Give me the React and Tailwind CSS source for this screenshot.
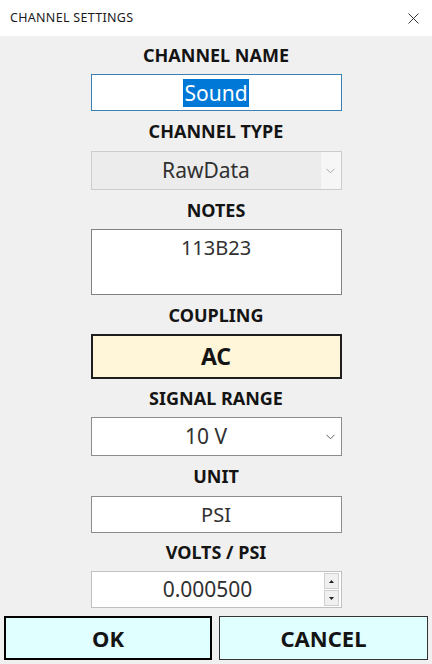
/* eslint-disable */
import { useState } from 'react';

const font = { fontFamily: '"Noto Sans", "Open Sans", sans-serif' };

const Chevron = ({ color = '#606060' }) => (
    <svg width="9" height="6" viewBox="0 0 9 6" fill="none">
        <path d="M0.5 0.8 L4.5 4.8 L8.5 0.8" stroke={color} strokeWidth="1" />
    </svg>
);

const Label = ({ children, h }) => (
    <div className={`${h} flex items-center justify-center text-[18px] font-bold text-[#141414] leading-none`}>
        {children}
    </div>
);

const ChannelSettings = () => {
    const [coupling, setCoupling] = useState('AC');

    return (
        <div className="w-[432px] h-[664px] bg-[#f0f0f0] flex flex-col overflow-hidden" style={font}>
            {/* title bar */}
            <div className="h-[36px] bg-white flex items-center justify-between pl-[10px] pr-[13px]">
                <span className="text-[12.5px] text-[#1b1b1b] tracking-[0.3px]">CHANNEL SETTINGS</span>
                <svg width="11" height="11" viewBox="0 0 11 11">
                    <path d="M0.5 0.5 L10.5 10.5 M10.5 0.5 L0.5 10.5" stroke="#333" strokeWidth="1" />
                </svg>
            </div>

            <div className="flex flex-col items-center">
                <Label h="h-[38px]">CHANNEL NAME</Label>
                <div className="w-[251px] h-[37px] bg-white border border-[#3c7fb1] flex items-center justify-center">
                    <span className="bg-[#0078d7] text-white text-[21px] leading-[28px] px-[1px]">Sound</span>
                </div>

                <Label h="h-[40px]">CHANNEL TYPE</Label>
                <div className="w-[251px] h-[39px] border border-[#cccccc] bg-[#ececec] flex">
                    <div className="flex-1 flex items-center justify-center text-[21px] text-[#303030]">RawData</div>
                    <div className="w-[20px] bg-[#f6f6f6] flex items-center justify-center">
                        <Chevron color="#a8a8a8" />
                    </div>
                </div>

                <Label h="h-[39px]">NOTES</Label>
                <div className="w-[251px] h-[66px] bg-white border border-[#828282] flex justify-center pt-[5px] text-[20px] text-[#303030] leading-[26px]">
                    113B23
                </div>

                <Label h="h-[39px]">COUPLING</Label>
                <button
                    onClick={() => setCoupling(coupling === 'AC' ? 'DC' : 'AC')}
                    className="w-[251px] h-[45px] bg-[#fff6d9] border-2 border-[#1e1e1e] flex items-center justify-center text-[23px] font-bold text-[#141414]"
                >
                    {coupling}
                </button>

                <Label h="h-[38px]">SIGNAL RANGE</Label>
                <div className="w-[251px] h-[39px] bg-white border border-[#8c8c8c] flex items-center pr-[20px] relative">
                    <div className="flex-1 text-center text-[21px] text-[#303030]">10 V</div>
                    <div className="absolute right-[6px] top-[16px]">
                        <Chevron />
                    </div>
                </div>

                <Label h="h-[40px]">UNIT</Label>
                <div className="w-[251px] h-[37px] bg-white border border-[#8c8c8c] flex items-center justify-center text-[20px] text-[#303030]">
                    PSI
                </div>

                <Label h="h-[38px]">VOLTS / PSI</Label>
                <div className="w-[251px] h-[37px] bg-white border border-[#c0c0c0] flex items-center">
                    <div className="flex-1 text-center text-[21px] text-[#303030]">0.000500</div>
                    <div className="flex flex-col gap-[1px] mr-[2px]">
                        <div className="w-[15px] h-[16px] bg-[#f0f0f0] border border-[#cfcfcf] flex items-center justify-center">
                            <svg width="5" height="3" viewBox="0 0 5 3"><path d="M2.5 0 L5 3 L0 3 Z" fill="#222" /></svg>
                        </div>
                        <div className="w-[15px] h-[16px] bg-[#f0f0f0] border border-[#cfcfcf] flex items-center justify-center">
                            <svg width="5" height="3" viewBox="0 0 5 3"><path d="M0 0 L5 0 L2.5 3 Z" fill="#222" /></svg>
                        </div>
                    </div>
                </div>
            </div>

            <div className="flex gap-[7px] px-[4px] mt-[8px]">
                <button className="w-[208px] h-[44px] bg-[#e0ffff] border-2 border-black flex items-center justify-center text-[22px] font-bold text-[#141414]">
                    OK
                </button>
                <button className="w-[209px] h-[44px] bg-[#e0ffff] border border-[#333] flex items-center justify-center text-[22px] font-bold text-[#141414]">
                    CANCEL
                </button>
            </div>
        </div>
    );
};

export default ChannelSettings;
